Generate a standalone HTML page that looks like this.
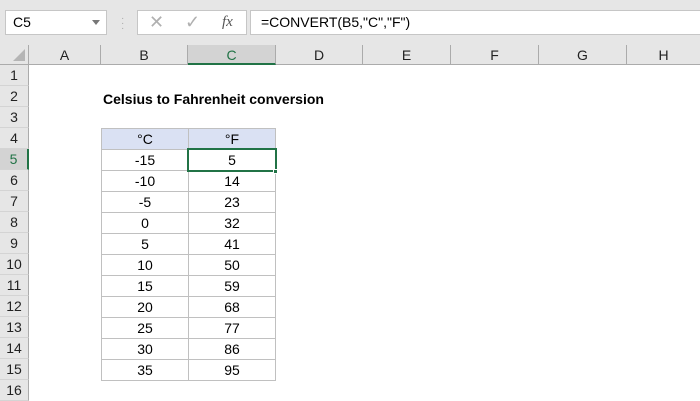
<!DOCTYPE html>
<html><head><style>
*{margin:0;padding:0;box-sizing:border-box}
body{width:700px;height:400px;overflow:hidden;background:#fff;font-family:"Liberation Sans",sans-serif;font-size:14px;position:relative;color:#000}
.a{position:absolute}
.ch{position:absolute;top:45px;height:20px;background:#e6e6e6;border-right:1px solid #ababab;border-bottom:1px solid #ababab;text-align:center;line-height:20px;font-size:14px;color:#222}
.rh{position:absolute;left:0;width:29px;height:21px;background:#e6e6e6;border-right:1px solid #ababab;border-bottom:1px solid #d4d4d4;text-align:center;line-height:21px;font-size:14px;color:#222}
.c{position:absolute;height:22px;border:1px solid #c0c0c0;text-align:center;line-height:20px;font-size:14px}
</style></head><body>
<div class="a" style="left:0;top:0;width:700px;height:45px;background:#e6e6e6"></div>
<div class="a" style="left:5px;top:10px;width:102px;height:25px;background:#fff;border:1px solid #c6c6c6;font-size:14px;line-height:23px;padding-left:7px">C5</div>
<div class="a" style="left:92px;top:20px;width:0;height:0;border-left:4px solid transparent;border-right:4px solid transparent;border-top:5px solid #777"></div>
<div class="a" style="left:121px;top:16px;color:#aaa;font-size:10px;line-height:5px">·<br>·<br>·</div>
<div class="a" style="left:137px;top:10px;width:110px;height:25px;background:#fff;border:1px solid #c6c6c6"></div>
<div class="a" style="left:149px;top:12px;color:#b0b0b0;font-size:18px">✕</div>
<div class="a" style="left:185px;top:12px;color:#b0b0b0;font-size:18px">✓</div>
<div class="a" style="left:222px;top:14px;color:#555;font-size:15px;font-style:italic;font-family:'Liberation Serif',serif">fx</div>
<div class="a" style="left:250px;top:10px;width:450px;height:25px;background:#fff;border:1px solid #c6c6c6;border-right:none;line-height:23px;padding-left:10px;font-size:14px">=CONVERT(B5,"C","F")</div>
<div class="ch" style="left:0;width:29px"><div class="a" style="right:3px;bottom:3px;width:0;height:0;border-left:12px solid transparent;border-bottom:12px solid #b5b5b5"></div></div>
<div class="ch" style="left:29px;width:72px">A</div>
<div class="ch" style="left:101px;width:87px">B</div>
<div class="ch" style="left:188px;width:88px;background:#d3d3d3;border-bottom:2px solid #217346;color:#217346">C</div>
<div class="ch" style="left:276px;width:87px">D</div>
<div class="ch" style="left:363px;width:88px">E</div>
<div class="ch" style="left:451px;width:88px">F</div>
<div class="ch" style="left:539px;width:88px">G</div>
<div class="ch" style="left:627px;width:73px;border-right:none">H</div>
<div class="rh" style="top:65px">1</div>
<div class="rh" style="top:86px">2</div>
<div class="rh" style="top:107px">3</div>
<div class="rh" style="top:128px">4</div>
<div class="rh" style="top:149px;background:#d3d3d3;color:#217346;border-right:2px solid #217346">5</div>
<div class="rh" style="top:170px">6</div>
<div class="rh" style="top:191px">7</div>
<div class="rh" style="top:212px">8</div>
<div class="rh" style="top:233px">9</div>
<div class="rh" style="top:254px">10</div>
<div class="rh" style="top:275px">11</div>
<div class="rh" style="top:296px">12</div>
<div class="rh" style="top:317px">13</div>
<div class="rh" style="top:338px">14</div>
<div class="rh" style="top:359px">15</div>
<div class="rh" style="top:380px">16</div>
<div class="a" style="left:103px;top:89px;font-weight:bold;font-size:14px;line-height:21px">Celsius to Fahrenheit conversion</div>
<div class="c" style="left:101px;top:128px;width:88px;background:#dae1f3">°C</div>
<div class="c" style="left:188px;top:128px;width:88px;background:#dae1f3">°F</div>
<div class="c" style="left:101px;top:149px;width:88px">-15</div><div class="c" style="left:188px;top:149px;width:88px">5</div>
<div class="c" style="left:101px;top:170px;width:88px">-10</div><div class="c" style="left:188px;top:170px;width:88px">14</div>
<div class="c" style="left:101px;top:191px;width:88px">-5</div><div class="c" style="left:188px;top:191px;width:88px">23</div>
<div class="c" style="left:101px;top:212px;width:88px">0</div><div class="c" style="left:188px;top:212px;width:88px">32</div>
<div class="c" style="left:101px;top:233px;width:88px">5</div><div class="c" style="left:188px;top:233px;width:88px">41</div>
<div class="c" style="left:101px;top:254px;width:88px">10</div><div class="c" style="left:188px;top:254px;width:88px">50</div>
<div class="c" style="left:101px;top:275px;width:88px">15</div><div class="c" style="left:188px;top:275px;width:88px">59</div>
<div class="c" style="left:101px;top:296px;width:88px">20</div><div class="c" style="left:188px;top:296px;width:88px">68</div>
<div class="c" style="left:101px;top:317px;width:88px">25</div><div class="c" style="left:188px;top:317px;width:88px">77</div>
<div class="c" style="left:101px;top:338px;width:88px">30</div><div class="c" style="left:188px;top:338px;width:88px">86</div>
<div class="c" style="left:101px;top:359px;width:88px">35</div><div class="c" style="left:188px;top:359px;width:88px">95</div>
<div class="a" style="left:187px;top:148px;width:90px;height:24px;border:2px solid #217346"></div>
<div class="a" style="left:273px;top:169px;width:5px;height:5px;background:#217346;border:1px solid #fff"></div>
</body></html>
